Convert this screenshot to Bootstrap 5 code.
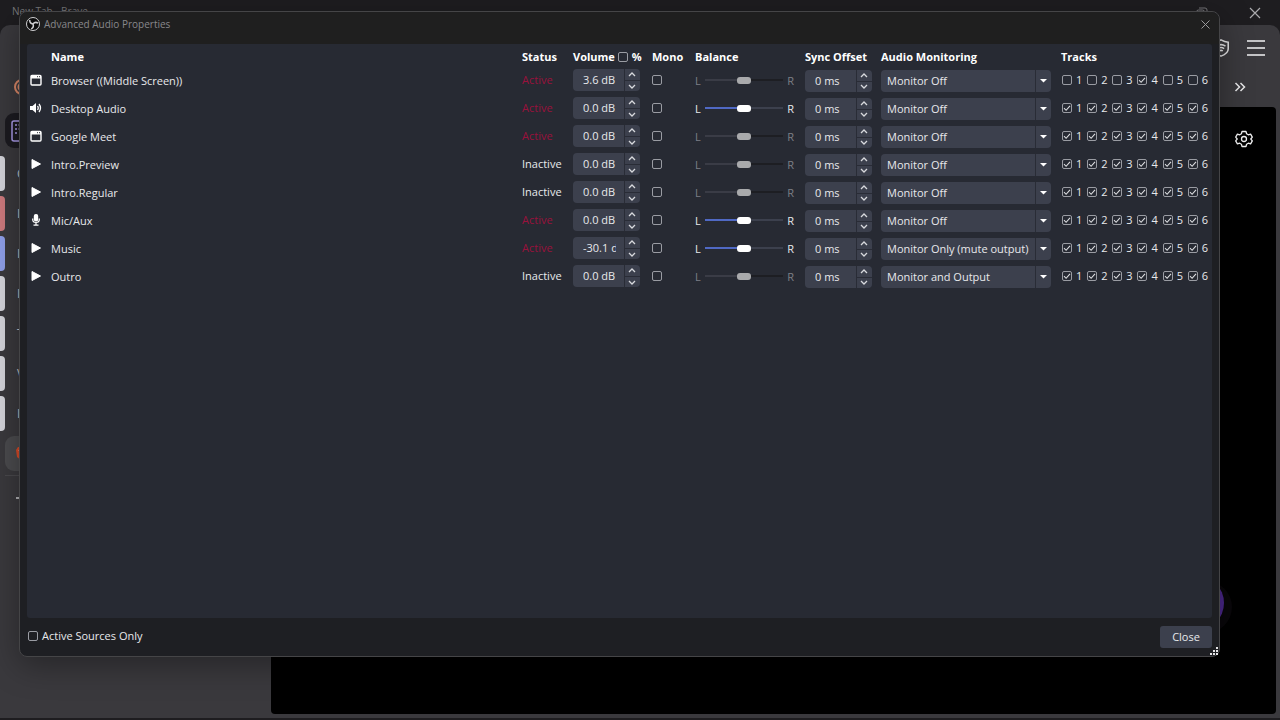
<!DOCTYPE html>
<html lang="en">
<head>
<meta charset="utf-8">
<meta name="viewport" content="width=device-width, initial-scale=1">
<title>Advanced Audio Properties</title>
<link href="https://cdn.jsdelivr.net/npm/bootstrap@5.3.0/dist/css/bootstrap.min.css" rel="stylesheet">
<style>
  :root { --panel: #272a33; --field: #3c404d; --line: #292c36; }
  body { font-family: "Open Sans", "Noto Sans", sans-serif; font-size: 11px; line-height: 18px; color: #e8e9ec; background: #39383c; }
  svg { display: block; flex: none; }
  button { color: inherit; }

  /* browser window behind */
  .browser { background: #1e1d20; }
  .titlebar { height: 25px; padding: 0 18px 0 12px; font-size: 10px; line-height: 23px; color: #77777a; }
  .chrome { background: #3a393d; border-radius: 10px 10px 0 0; margin-bottom: 2px; }
  .toolbar-top { height: 45px; padding-right: 14px; }
  .toolbar-sub { height: 37px; padding: 0 34px 4px 14px; }
  .sidebar { width: 271px; padding-top: 6px; }
  .pinned { width: 60px; height: 35px; margin-left: 5px; padding-left: 6px; border-radius: 9px; background: #1c1b20; }
  .tab-mark { width: 5px; height: 35px; border-radius: 0 4px 4px 0; background: #d4d4da; }
  .tab-red { background: #cd7a7d; }
  .tab-blue { background: #8f9fe8; }
  .tab-list { gap: 5px; margin-top: 8px; }
  .tab-name { margin-left: 12px; font-size: 12px; color: #c4c4c8; }
  .current { width: 120px; height: 35px; margin: 5px 0 0 5px; padding-left: 10px; border-radius: 9px; background: #4b4b4e; }
  .divider { width: 250px; height: 1px; margin: 4px 0 0 5px; background: #4a494d; }
  .viewport { background: #000; border-radius: 4px; margin: 0 4px 4px 0; padding: 23px 23px 83px; }
  .orb { width: 56px; height: 56px; margin-right: 29px; border-radius: 50%; background: #4a2789; box-shadow: 10px 4px 0 -2px #09070a; }

  /* dialog */
  .dialog { position: absolute; inset: 11px 60px 63px 19px; background: #1e1f23; border: 1px solid #454547; border-radius: 8px; box-shadow: 0 8px 32px rgba(0,0,0,.35); }
  .dialog-head { height: 32px; padding: 0 9px 8px 6px; background: #1f1f1f; border-radius: 8px 8px 0 0; font-size: 10px; color: #88888b; }
  .dialog-foot { height: 38px; padding: 0 7px 0 8px; }
  .dialog-foot label { padding-bottom: 2px; }
  .sources { margin: 0 7px; background: var(--panel); border-radius: 3px; }
  .props { width: 100%; table-layout: fixed; }
  .props th { height: 22px; padding: 3px 0 0; font-weight: 700; line-height: 18px; color: #fff; white-space: nowrap; }
  .props td { height: 28px; padding: 0; vertical-align: middle; white-space: nowrap; }
  .props .source-name { padding-top: 2px; }
  .c-icon { width: 24px; } .c-status { width: 51px; } .c-volume { width: 79px; } .c-mono { width: 43px; }
  .c-balance { width: 110px; } .c-sync { width: 76px; } .c-monitor { width: 180px; } .c-tracks { width: 151px; }
  .source-icon { margin-left: 3px; }
  .percent { gap: 4px; margin-left: 3px; }
  .live { color: #9a113c; }

  .tick { appearance: none; flex: none; display: block; width: 10px; height: 10px; margin: 0; border: 1px solid #9a9ca3; border-radius: 2px; background: transparent; }
  .tick:checked { background: url("data:image/svg+xml,%3Csvg xmlns='http://www.w3.org/2000/svg' viewBox='0 0 8 8'%3E%3Cpath d='M1 4.2 3.1 6.3 7 1.8' fill='none' stroke='%23dcdde0' stroke-width='1.1'/%3E%3C/svg%3E") center/8px no-repeat; }

  .spin { width: 67px; height: 22px; border-radius: 4px; background: var(--field); overflow: hidden; }
  .spin input { width: 51px; padding: 0 8px 0 10px; border: 0; background: transparent; color: inherit; line-height: 18px; }
  .steps { width: 16px; border-left: 1px solid var(--line); }
  .steps button { height: 11px; padding: 0 2px 0 0; border: 0; background: transparent; display: grid; place-items: center; }
  .steps button + button { border-top: 1px solid var(--line); }

  .sync { margin-top: 1px; }
  .monitor { appearance: none; display: block; width: 170px; height: 22px; margin-top: 1px; padding: 0 18px 0 6px; border: 0; border-radius: 4px; color: inherit; line-height: 20px;
    background: var(--field) url("data:image/svg+xml,%3Csvg xmlns='http://www.w3.org/2000/svg' width='16' height='22'%3E%3Cpath d='M.5 0v22' stroke='%23292c36'/%3E%3Cpath d='M5 9h7L8.500 12.500z' fill='%23fff'/%3E%3C/svg%3E") right/16px 22px no-repeat; }

  .balance { width: 99px; }
  .balance span { padding-top: 2px; }
  .balance input { appearance: none; width: 78px; height: 8px; margin: 0; background: linear-gradient(90deg, #5069c4 50%, #3c404d 50%) center/100% 2px no-repeat; }
  .balance input::-webkit-slider-thumb { appearance: none; width: 14px; height: 7px; border-radius: 3px; background: #fff; }
  .balance.dim { color: #7d7f86; }
  .balance.dim input { background-image: linear-gradient(90deg, #3a3c46 50%, #1d1e23 50%); }
  .balance.dim input::-webkit-slider-thumb { background: #a9aaac; }

  .tracks { display: grid; grid-template-columns: repeat(6, 1fr); padding-left: 1px; margin-right: -1px; }
  .tracks label { gap: 4px; }
  .close-btn { width: 52px; height: 22px; padding: 0; border: 0; border-radius: 3px; background: var(--field); }
  .grip { position: absolute; right: 1px; bottom: 1px; }
</style>
</head>
<body>
<div class="browser vh-100 d-flex flex-column position-relative overflow-hidden">
  <header class="titlebar d-flex justify-content-between">
    <span>New Tab - Brave</span>
    <span class="d-flex align-items-center gap-4">
      <svg class="me-3" width="12" height="12" viewBox="0 0 12 12" fill="none" stroke="#77777a"><rect x=".5" y="3" width="8" height="8" rx="2"/><path d="M3 1h6q2 0 2 2v6"/></svg>
      <svg width="14" height="14" viewBox="0 0 14 14" stroke="#aaaaad" stroke-width="1.2"><path d="m2 2 10 10M12 2 2 12"/></svg>
    </span>
  </header>
  <div class="chrome flex-grow-1 d-flex flex-column">
    <div class="toolbar-top d-flex align-items-center justify-content-end gap-3">
      <svg width="18" height="20" viewBox="0 0 20 22" fill="none" stroke="#e4e4e6" stroke-width="1.7"><path d="M10 2q4 2.500 8 2.500V12q0 5-8 8-8-3-8-8V4.500Q6 4.500 10 2z"/><path d="M5 9q5-3.500 10 0M6.500 11.700q3.500-2.300 7 0M8 14.300q2-1.300 4 0"/></svg>
      <svg width="20" height="18" viewBox="0 0 20 18" stroke="#f2f2f3" stroke-width="1.5"><path d="M1 2h18M1 9h18M1 16h18"/></svg>
    </div>
    <div class="toolbar-sub d-flex align-items-center justify-content-between">
      <svg width="16" height="16" viewBox="0 0 16 16" fill="none" stroke="#d98767" stroke-width="2"><circle cx="8" cy="8" r="7"/><circle cx="8" cy="8" r="3.500"/></svg>
      <svg width="12" height="12" viewBox="0 0 12 12" fill="none" stroke="#e8e8ea" stroke-width="1.5"><path d="m1.500 2 4 4-4 4M6.500 2l4 4-4 4"/></svg>
    </div>
    <div class="flex-grow-1 d-flex">
      <nav class="sidebar">
        <div class="pinned d-flex align-items-center"><svg width="18" height="22" viewBox="0 0 18 22" fill="none" stroke="#a99be8" stroke-width="1.5"><rect x="1" y="1" width="16" height="20" rx="2"/><path d="M4 5h2m1.500 0h2M4 9h2m1.500 0h2M4 13h2"/></svg></div>
        <div class="tab-list d-flex flex-column">
          <div class="d-flex align-items-center"><span class="tab-mark"></span><span class="tab-name">C</span></div>
          <div class="d-flex align-items-center"><span class="tab-mark tab-red"></span><span class="tab-name">I</span></div>
          <div class="d-flex align-items-center"><span class="tab-mark tab-blue"></span><span class="tab-name">I</span></div>
          <div class="d-flex align-items-center"><span class="tab-mark"></span><span class="tab-name">I</span></div>
          <div class="d-flex align-items-center"><span class="tab-mark"></span><span class="tab-name">T</span></div>
          <div class="d-flex align-items-center"><span class="tab-mark"></span><span class="tab-name">V</span></div>
          <div class="d-flex align-items-center"><span class="tab-mark"></span><span class="tab-name">I</span></div>
        </div>
        <div class="current d-flex align-items-center"><svg width="14" height="16" viewBox="0 0 14 16"><path d="m3 1-2 3 1 7 5 4 5-4 1-7-2-3z" fill="#d64a28"/><path d="m3 4 2 1-1 2 3 4 3-4-1-2 2-1-4 0z" fill="#eee"/></svg></div>
        <div class="divider"></div>
        <svg class="ms-3 mt-3" width="12" height="12" viewBox="0 0 12 12" stroke="#d8d8da" stroke-width="1.300"><path d="M0 6h12M6 0v12"/></svg>
      </nav>
      <main class="viewport flex-grow-1 d-flex flex-column align-items-end justify-content-between">
        <svg width="18" height="18" viewBox="0 0 18 18" fill="none" stroke="#f2f2f3" stroke-width="1.300" stroke-linejoin="round"><path d="m7 1.500h4l.6 2.300 1.700 1 2.300-.7 1.700 3-1.500 1.900 1.500 1.900-1.700 3-2.300-.7-1.700 1-.6 2.300H7l-.6-2.300-1.700-1-2.300.7-1.700-3L2.200 9 .7 7.100l1.700-3 2.300.7 1.700-1z"/><circle cx="9" cy="9" r="2.500"/></svg>
        <div class="orb"></div>
      </main>
    </div>
  </div>

  <section class="dialog d-flex flex-column" role="dialog" aria-labelledby="dialog-title">
    <header class="dialog-head d-flex align-items-center">
      <svg width="14" height="14" viewBox="0 0 28 28"><circle cx="14" cy="14" r="13" fill="#0c0c0c" stroke="#d0d0d2" stroke-width="2"/><g fill="none" stroke="#d0d0d2" stroke-width="3"><path d="M14 14Q7 13 7.500 6"/><path d="M14 14Q7 13 7.500 6" transform="rotate(120 14 14)"/><path d="M14 14Q7 13 7.500 6" transform="rotate(240 14 14)"/></g></svg>
      <span id="dialog-title" class="ms-1">Advanced Audio Properties</span>
      <button type="button" class="ms-auto p-0 border-0 bg-transparent" aria-label="Close window"><svg width="9" height="9" viewBox="0 0 9 9" stroke="#9a9a9c"><path d="m.5.5 8 8M8.500.5l-8 8"/></svg></button>
    </header>
    <div class="sources flex-grow-1">
      <table class="props">
        <colgroup><col class="c-icon"><col><col class="c-status"><col class="c-volume"><col class="c-mono"><col class="c-balance"><col class="c-sync"><col class="c-monitor"><col class="c-tracks"></colgroup>
        <thead>
          <tr>
            <th></th><th>Name</th><th>Status</th>
            <th><span class="d-flex align-items-center">Volume<label class="percent d-flex align-items-center"><input type="checkbox" class="tick">%</label></span></th>
            <th>Mono</th><th>Balance</th><th>Sync Offset</th><th>Audio Monitoring</th><th>Tracks</th>
          </tr>
        </thead>
        <tbody id="rows"></tbody>
      </table>
    </div>
    <footer class="dialog-foot d-flex align-items-center justify-content-between">
      <label class="d-flex align-items-center gap-1"><input type="checkbox" class="tick">Active Sources Only</label>
      <button type="button" class="close-btn">Close</button>
    </footer>
    <svg class="grip" width="8" height="8" viewBox="0 0 8 8" fill="#e4e4e6"><path d="M6 0h2v2H6zM6 3h2v2H6zM6 6h2v2H6zM3 3h2v2H3zM3 6h2v2H3zM0 6h2v2H0z"/></svg>
  </section>
</div>

<script>
  const icons = {
    window: '<rect x="1" y="1.500" width="10" height="9.500" rx="1" fill="none" stroke="#fff" stroke-width="1.400"/><path d="M1 1h10v3.500H1z" fill="#fff"/><path d="M7 2.700h1m1 0h1" stroke="#272a33"/>',
    speaker: '<path d="M0 4h2.500L6 1v10L2.500 8H0z" fill="#fff"/><path d="M7.500 4q1.500 2 0 4M9 2q3 4 0 8" fill="none" stroke="#fff" stroke-width="1.300"/>',
    play: '<path d="M2 1.500 10.500 6 2 10.500z" fill="#fff" stroke="#fff"/>',
    mic: '<rect x="3.800" y="0" width="4.400" height="7.500" rx="2" fill="#fff"/><path d="M2.700 4.500v1q0 3 3.300 3t3.300-3v-1M6 8v3M3.500 11.200h5" fill="none" stroke="#fff" stroke-width="1.200"/>'
  };
  const all = '123456';
  const sources = [
    ['window', 'Browser ((Middle Screen))', true, '3.6 dB', false, 'Monitor Off', '4'],
    ['speaker', 'Desktop Audio', true, '0.0 dB', true, 'Monitor Off', all],
    ['window', 'Google Meet', true, '0.0 dB', false, 'Monitor Off', all],
    ['play', 'Intro.Preview', false, '0.0 dB', false, 'Monitor Off', all],
    ['play', 'Intro.Regular', false, '0.0 dB', false, 'Monitor Off', all],
    ['mic', 'Mic/Aux', true, '0.0 dB', true, 'Monitor Off', all],
    ['play', 'Music', true, '-30.1 dB', true, 'Monitor Only (mute output)', all],
    ['play', 'Outro', false, '0.0 dB', false, 'Monitor and Output', all]
  ];
  const modes = ['Monitor Off', 'Monitor Only (mute output)', 'Monitor and Output'];
  const chevron = d => `<svg width="8" height="5" viewBox="0 0 8 5" fill="none" stroke="#d8d9dd" stroke-width="1.300"><path d="${d}"/></svg>`;
  const spin = (value, label, kind) => `<div class="spin ${kind} d-flex"><input type="text" value="${value}" aria-label="${label}"><div class="steps d-flex flex-column">
    <button type="button" aria-label="Increase">${chevron('M1 4l3-3 3 3')}</button><button type="button" aria-label="Decrease">${chevron('M1 1l3 3 3-3')}</button></div></div>`;
  document.getElementById('rows').innerHTML = sources.map(([icon, name, live, volume, stereo, mode, on]) => `<tr>
    <td><svg class="source-icon" width="12" height="12" viewBox="0 0 12 12">${icons[icon]}</svg></td>
    <td class="source-name">${name}</td>
    <td class="${live ? 'live' : ''}">${live ? 'Active' : 'Inactive'}</td>
    <td>${spin(volume, name + ' volume', 'volume')}</td>
    <td><input type="checkbox" class="tick" aria-label="${name} mono"></td>
    <td><div class="balance d-flex align-items-center justify-content-between ${stereo ? '' : 'dim'}"><span>L</span><input type="range" value="50" aria-label="${name} balance" ${stereo ? '' : 'disabled'}><span>R</span></div></td>
    <td>${spin('0 ms', name + ' sync offset', 'sync')}</td>
    <td><select class="monitor" aria-label="${name} monitoring">${modes.map(m => `<option${m === mode ? ' selected' : ''}>${m}</option>`).join('')}</select></td>
    <td><div class="tracks">${[...all].map(n => `<label class="d-flex align-items-center"><input type="checkbox" class="tick"${on.includes(n) ? ' checked' : ''}>${n}</label>`).join('')}</div></td>
  </tr>`).join('');
</script>
<script src="https://cdn.jsdelivr.net/npm/bootstrap@5.3.0/dist/js/bootstrap.bundle.min.js"></script>
</body>
</html>
